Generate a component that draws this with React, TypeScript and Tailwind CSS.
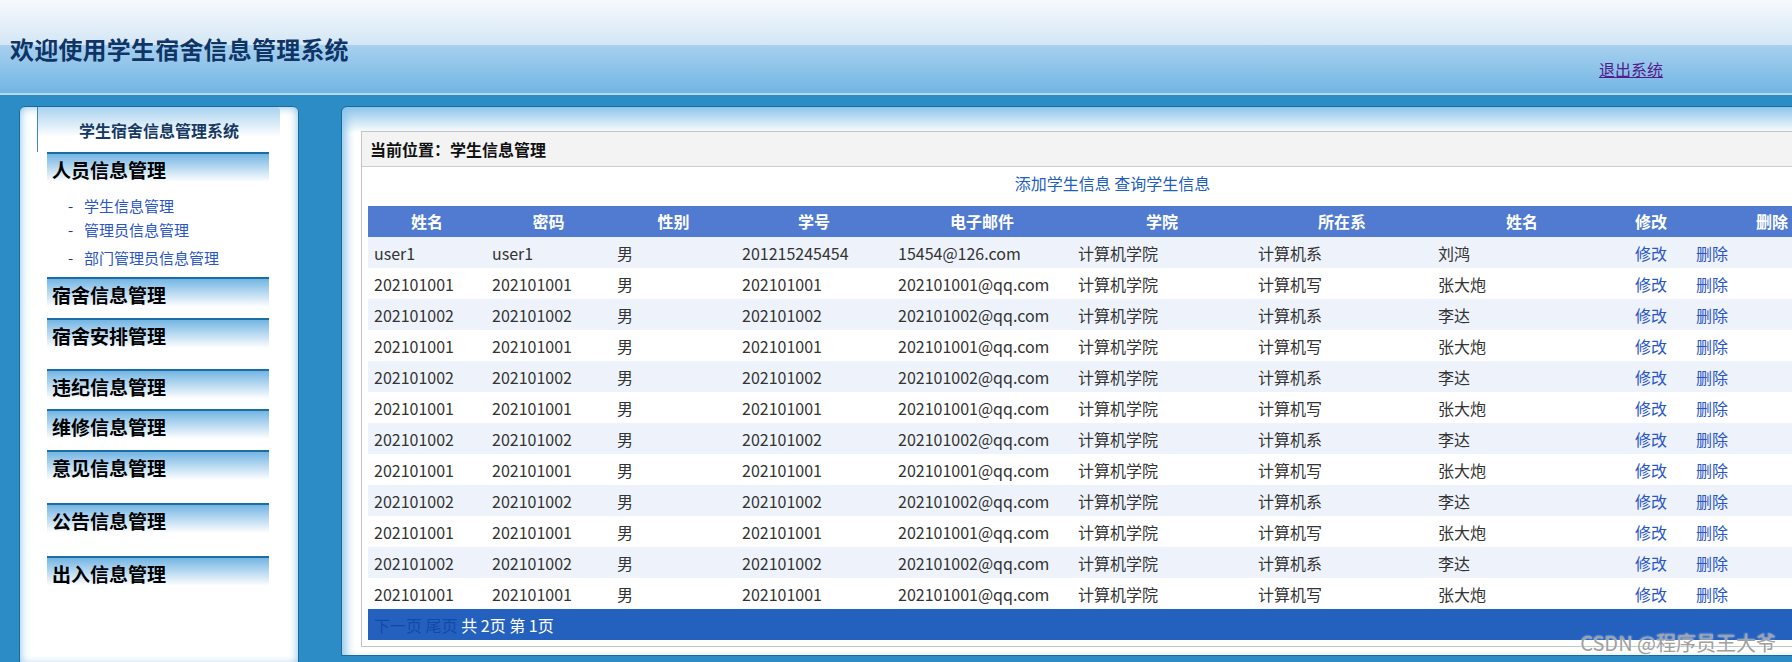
import React from 'react';

// Sidebar menu groups: height is the distance to the next group's top border.
const MENU: { title: string; height: number; items?: string[] }[] = [
  { title: '人员信息管理', height: 125, items: ['学生信息管理', '管理员信息管理', '部门管理员信息管理'] },
  { title: '宿舍信息管理', height: 41 },
  { title: '宿舍安排管理', height: 51 },
  { title: '违纪信息管理', height: 40 },
  { title: '维修信息管理', height: 41 },
  { title: '意见信息管理', height: 53 },
  { title: '公告信息管理', height: 53 },
  { title: '出入信息管理', height: 60 },
];

const HEADERS = ['姓名', '密码', '性别', '学号', '电子邮件', '学院', '所在系', '姓名', '修改', '删除'];

interface Student {
  name: string;
  password: string;
  sex: string;
  no: string;
  email: string;
  college: string;
  dept: string;
  realName: string;
}

const A: Student = {
  name: '202101001',
  password: '202101001',
  sex: '男',
  no: '202101001',
  email: '202101001@qq.com',
  college: '计算机学院',
  dept: '计算机写',
  realName: '张大炮',
};

const B: Student = {
  name: '202101002',
  password: '202101002',
  sex: '男',
  no: '202101002',
  email: '202101002@qq.com',
  college: '计算机学院',
  dept: '计算机系',
  realName: '李达',
};

const ROWS: Student[] = [
  {
    name: 'user1',
    password: 'user1',
    sex: '男',
    no: '201215245454',
    email: '15454@126.com',
    college: '计算机学院',
    dept: '计算机系',
    realName: '刘鸿',
  },
  A, B, A, B, A, B, A, B, A, B, A,
];

function Sidebar() {
  return (
    <div className="w-[280px] h-[560px] shrink-0 ml-[19px] rounded-t-[6px] border border-[#1b6a9e] bg-white shadow-[inset_0_0_10px_#7dbbe6]">
      {/* Title */}
      <div className="ml-[17px] w-[243px] h-[45px] border-l border-[#3f87bd] flex items-center justify-center text-[16px] font-semibold text-[#163a63] bg-[linear-gradient(to_bottom,#a9d2ef,#ffffff_30px)] rounded-tr-[4px]">
        学生宿舍信息管理系统
      </div>

      {MENU.map((g) => (
        <div
          key={g.title}
          className="ml-[27px] w-[222px] border-t-2 border-[#1a6ea6] bg-[linear-gradient(to_bottom,#74b5e3,#ffffff_28px)]"
          style={{ height: g.height }}
        >
          <div className="pl-[5px] pt-[4px] text-[19px] leading-[24px] font-bold text-black">{g.title}</div>
          {g.items && (
            <div className="mt-[12px] pl-[21px] text-[15px] leading-[24px]">
              {g.items.map((it, i) => (
                <div key={it} className={`flex ${i === 2 ? 'mt-[4px]' : ''}`}>
                  <span className="w-[16px] text-[#1d3f6e]">-</span>
                  <span className="text-[#2a55c8]">{it}</span>
                </div>
              ))}
            </div>
          )}
        </div>
      ))}
    </div>
  );
}

function StudentTable() {
  return (
    <table className="table-fixed border-collapse text-[16px]">
      <colgroup>
        <col className="w-[118px]" />
        <col className="w-[125px]" />
        <col className="w-[125px]" />
        <col className="w-[156px]" />
        <col className="w-[180px]" />
        <col className="w-[180px]" />
        <col className="w-[180px]" />
        <col className="w-[180px]" />
        <col className="w-[78px]" />
        <col className="w-[164px]" />
      </colgroup>
      <thead>
        <tr className="h-[31px] bg-[#507bd0]">
          {HEADERS.map((h, i) => (
            <th key={i} className="p-0 text-center font-bold text-white leading-[31px]">
              {h}
            </th>
          ))}
        </tr>
      </thead>
      <tbody>
        {ROWS.map((r, idx) => (
          <tr key={idx} className={`h-[31px] ${idx % 2 === 0 ? 'bg-[#eef3fb]' : 'bg-white'} text-[#333]`}>
            <td className="px-[6px]">{r.name}</td>
            <td className="px-[6px]">{r.password}</td>
            <td className="px-[6px]">{r.sex}</td>
            <td className="px-[6px]">{r.no}</td>
            <td className="px-[6px]">{r.email}</td>
            <td className="px-[6px]">{r.college}</td>
            <td className="px-[6px]">{r.dept}</td>
            <td className="px-[6px]">{r.realName}</td>
            <td className="text-center text-[#2a55c8]">修改</td>
            <td className="px-[6px] text-[#2a55c8]">删除</td>
          </tr>
        ))}
        <tr className="h-[31px] bg-[#2461bf]">
          <td colSpan={10} className="px-[6px] text-white">
            <span className="text-[#1448a8]">下一页 尾页</span> 共 2页 第 1页
          </td>
        </tr>
      </tbody>
    </table>
  );
}

export default function App() {
  return (
    <div className="relative w-full h-[662px] overflow-hidden bg-[#2b8cc6] font-['Microsoft_YaHei','Noto_Sans_CJK_SC',sans-serif]">
      {/* Header */}
      <div className="h-[95px] flex items-start justify-between bg-[linear-gradient(to_bottom,#f6f9fd_0px,#d4e6f5_45px,#a7d0ee_45px,#72b6e4_93px,#b9d9ef_93px,#b9d9ef_95px)]">
        <div className="pl-[10px] pt-[35px] text-[24px] leading-[28px] font-bold tracking-[0.2px] text-[#0e3566]">
          欢迎使用学生宿舍信息管理系统
        </div>
        <a className="mr-[129px] mt-[58px] text-[16px] leading-[22px] text-[#551a8b] underline cursor-pointer">
          退出系统
        </a>
      </div>

      {/* Body */}
      <div className="flex mt-[11px]">
        <Sidebar />

        <div className="ml-[42px] w-[1560px] h-[550px] shrink-0 rounded-tl-[6px] border border-[#1b6a9e] bg-[linear-gradient(to_bottom,#8cc5ea,#ffffff_26px)] shadow-[inset_8px_0_10px_-4px_#8cc5ea]">
          <div className="ml-[19px] mt-[24px] w-[1502px] border border-[#c4c4c4] border-r-0 bg-white pb-[6px]">
            <div className="h-[35px] bg-[#f3f3f3] border-b border-[#cccccc] flex items-center pl-[8px] text-[16px] font-bold text-[#111]">
              当前位置：学生信息管理
            </div>
            <div className="h-[39px] flex justify-center pt-[5px] text-[16px] leading-[22px] text-[#1f5fbf]">
              添加学生信息 查询学生信息
            </div>
            <div className="px-[6px]">
              <StudentTable />
            </div>
          </div>
        </div>
      </div>

      {/* Watermark */}
      <div className="absolute right-[16px] top-[630px] text-[20px] leading-[26px] text-[#a0a0a0] [text-shadow:0_0_2px_#ffffff]">
        CSDN @程序员王大爷
      </div>
    </div>
  );
}
